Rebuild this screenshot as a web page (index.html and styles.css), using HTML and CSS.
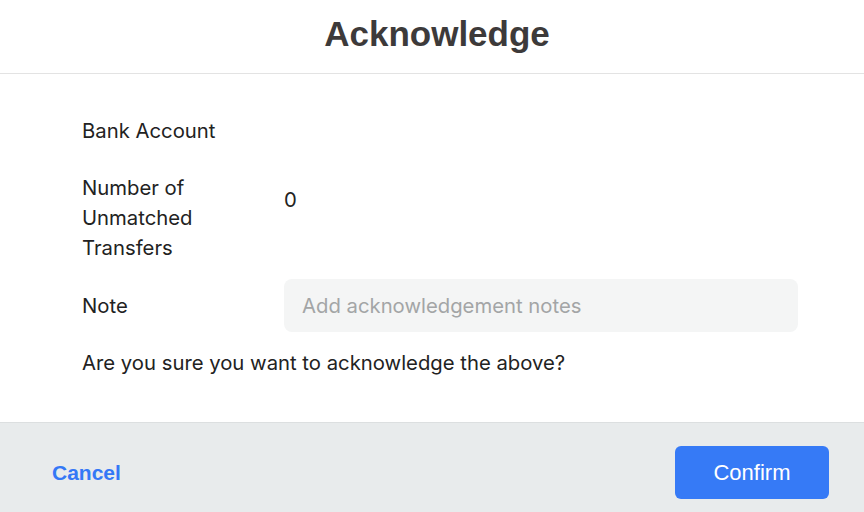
FILE: index.html
```html
<!DOCTYPE html>
<html lang="en">
  <head>
    <meta charset="UTF-8" />
    <meta name="viewport" content="width=device-width, initial-scale=1.0" />
    <title>Acknowledge</title>
    <link rel="stylesheet" href="styles.css">
  </head>
  <body>
    <div class="dialog">
      <div class="dialog-header">
        <h1>Acknowledge</h1>
      </div>

      <div class="dialog-body">
        <div class="field">
          <div class="label">Bank Account</div>
          <div class="value"></div>
        </div>
        <div class="field">
          <div class="label">Number of<br>Unmatched<br>Transfers</div>
          <div class="value value-top">0</div>
        </div>
        <div class="field">
          <div class="label">Note</div>
          <input class="note-input" type="text" placeholder="Add acknowledgement notes">
        </div>
        <p class="question">Are you sure you want to acknowledge the above?</p>
      </div>

      <div class="dialog-footer">
        <button class="btn-cancel">Cancel</button>
        <button class="btn-confirm">Confirm</button>
      </div>
    </div>
  </body>
</html>
```

FILE: styles.css
```css
* {
  margin: 0;
  padding: 0;
  box-sizing: border-box;
}

body {
  background: #ffffff;
  font-family: Inter, "Noto Sans", sans-serif;
  color: #222222;
  height: 100vh;
  overflow: hidden;
}

.dialog {
  display: flex;
  flex-direction: column;
  height: 100%;
}

.dialog-header {
  height: 74px;
  border-bottom: 1px solid #e3e3e3;
  display: flex;
  justify-content: center;
  align-items: center;
}

.dialog-header h1 {
  font-family: "Liberation Sans", Arial, sans-serif;
  font-weight: bold;
  font-size: 35px;
  color: #3d3a3a;
  margin-top: -6px;
  margin-left: 10px;
}

.dialog-body {
  flex: 1;
  padding: 42px 66px 0 82px;
  display: flex;
  flex-direction: column;
  gap: 16px;
  font-size: 20.3px;
  line-height: 30px;
}

.field {
  display: grid;
  grid-template-columns: 202px 1fr;
  align-items: center;
}

.field:first-child {
  margin-bottom: 11px;
}

.value {
  margin-top: -3px;
}

.value-top {
  align-self: start;
  margin-top: 12px;
}

.note-input {
  height: 53px;
  border: none;
  border-radius: 8px;
  background: #f4f5f5;
  padding: 0 18px;
  font-family: inherit;
  font-size: 20.3px;
  color: #222222;
  outline: none;
}

.note-input::placeholder {
  color: #a3a5a6;
}

.dialog-footer {
  height: 90px;
  background: #e8ebec;
  border-top: 1px solid #dcdfe0;
  display: flex;
  justify-content: space-between;
  align-items: center;
  padding: 10px 35px 0 52px;
}

.btn-cancel {
  border: none;
  background: none;
  font-family: "Liberation Sans", Arial, sans-serif;
  font-weight: bold;
  font-size: 21px;
  color: #3478f6;
  cursor: pointer;
}

.btn-confirm {
  width: 154px;
  height: 53px;
  border: none;
  border-radius: 6px;
  background: #367af6;
  color: #ffffff;
  font-family: "Liberation Sans", Arial, sans-serif;
  font-size: 22px;
  cursor: pointer;
}
```
